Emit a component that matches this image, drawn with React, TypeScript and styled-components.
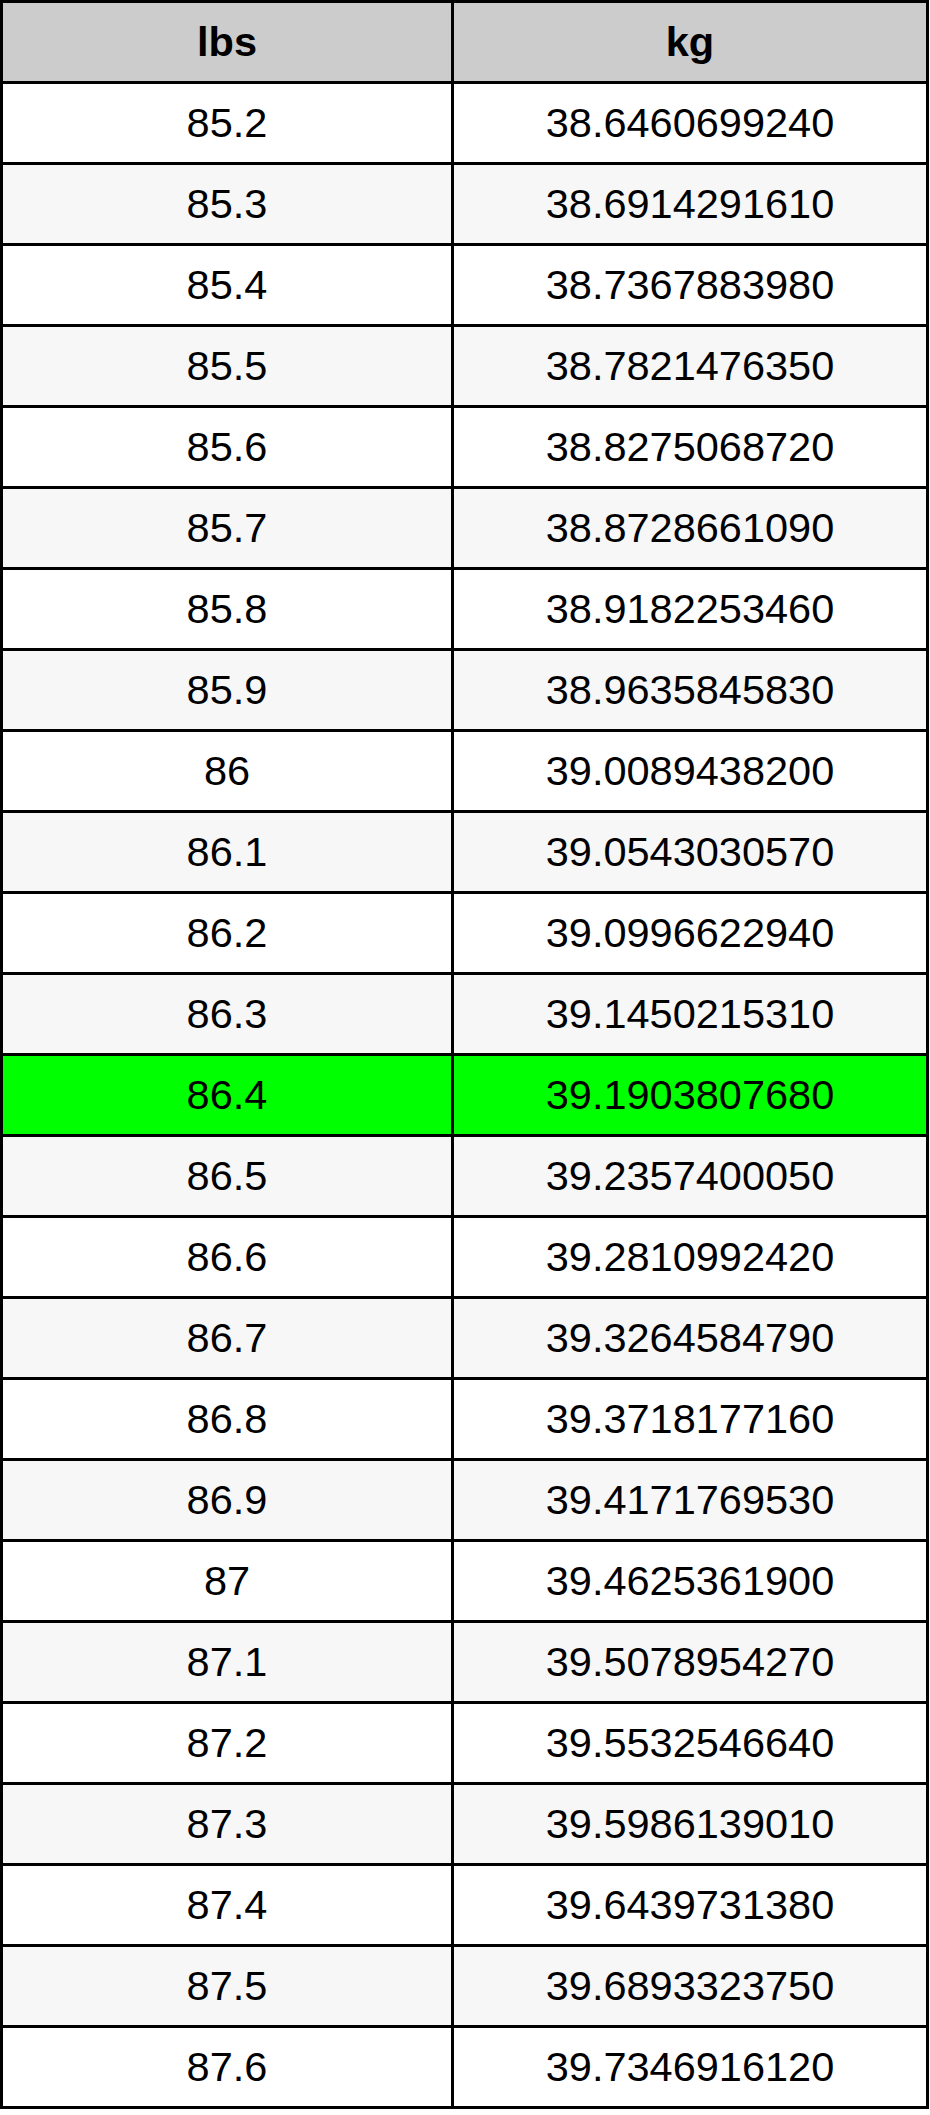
import { createGlobalStyle, styled } from "styled-components";

const GlobalStyle = createGlobalStyle`
  html, body {
    margin: 0;
    padding: 0;
    background: #ffffff;
  }
  body {
    font-family: "Liberation Sans", Arial, sans-serif;
  }
`;

// black background shows through the gaps and acts as the grid lines
const Table = styled.div`
  display: flex;
  flex-direction: column;
  gap: 3px;
  width: 923px;
  padding: 3px;
  background: #000;
`;

const Row = styled.div`
  display: grid;
  grid-template-columns: 448px 472px;
  gap: 3px;
  height: 78px;
`;

type Tone = "head" | "plain" | "striped" | "hit";

const tones: Record<Tone, string> = {
  head: "#cccccc",
  plain: "#ffffff",
  striped: "#f7f7f7",
  hit: "#00ff00",
};

const Cell = styled.div<{ $tone: Tone }>`
  display: flex;
  align-items: center;
  justify-content: center;
  background: ${(p) => tones[p.$tone]};
  color: #000;
  font-size: 41.5px;
  font-weight: ${(p) => (p.$tone === "head" ? 700 : 400)};
`;

const rows: [string, string][] = [
  ["85.2", "38.6460699240"],
  ["85.3", "38.6914291610"],
  ["85.4", "38.7367883980"],
  ["85.5", "38.7821476350"],
  ["85.6", "38.8275068720"],
  ["85.7", "38.8728661090"],
  ["85.8", "38.9182253460"],
  ["85.9", "38.9635845830"],
  ["86", "39.0089438200"],
  ["86.1", "39.0543030570"],
  ["86.2", "39.0996622940"],
  ["86.3", "39.1450215310"],
  ["86.4", "39.1903807680"],
  ["86.5", "39.2357400050"],
  ["86.6", "39.2810992420"],
  ["86.7", "39.3264584790"],
  ["86.8", "39.3718177160"],
  ["86.9", "39.4171769530"],
  ["87", "39.4625361900"],
  ["87.1", "39.5078954270"],
  ["87.2", "39.5532546640"],
  ["87.3", "39.5986139010"],
  ["87.4", "39.6439731380"],
  ["87.5", "39.6893323750"],
  ["87.6", "39.7346916120"],
];

function App() {
  return (
    <>
      <GlobalStyle />
      <Table>
        <Row>
          <Cell $tone="head">lbs</Cell>
          <Cell $tone="head">kg</Cell>
        </Row>
        {rows.map(([lbs, kg], i) => {
          const tone: Tone = lbs === "86.4" ? "hit" : i % 2 ? "striped" : "plain";
          return (
            <Row key={lbs}>
              <Cell $tone={tone}>{lbs}</Cell>
              <Cell $tone={tone}>{kg}</Cell>
            </Row>
          );
        })}
      </Table>
    </>
  );
}

export default App;
